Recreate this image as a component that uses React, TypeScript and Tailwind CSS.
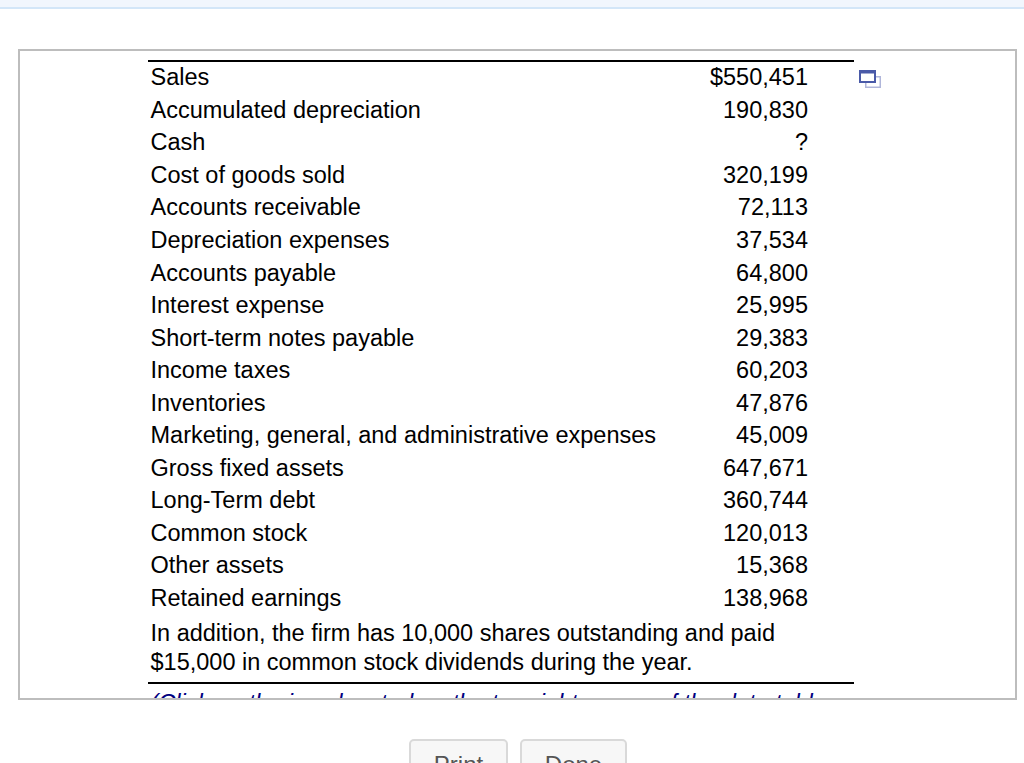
const rows: [string, string][] = [
  ["Sales", "$550,451"],
  ["Accumulated depreciation", "190,830"],
  ["Cash", "?"],
  ["Cost of goods sold", "320,199"],
  ["Accounts receivable", "72,113"],
  ["Depreciation expenses", "37,534"],
  ["Accounts payable", "64,800"],
  ["Interest expense", "25,995"],
  ["Short-term notes payable", "29,383"],
  ["Income taxes", "60,203"],
  ["Inventories", "47,876"],
  ["Marketing, general, and administrative expenses", "45,009"],
  ["Gross fixed assets", "647,671"],
  ["Long-Term debt", "360,744"],
  ["Common stock", "120,013"],
  ["Other assets", "15,368"],
  ["Retained earnings", "138,968"],
];

function CopyIcon() {
  return (
    <svg width="22" height="18" viewBox="0 0 22 18" className="shrink-0 mt-[10px] ml-[5px]" fill="none">
      <rect x="6.75" y="6.75" width="14.5" height="10.5" stroke="#b0b6da" strokeWidth="1.5" />
      <rect x="1" y="1" width="15" height="11" fill="#fff" stroke="#4a5aa8" strokeWidth="2" />
      <rect x="1" y="1" width="15" height="2.5" fill="#4a5aa8" />
    </svg>
  );
}

export default function App() {
  return (
    <div className="h-[763px] w-[1024px] overflow-hidden bg-white font-['Liberation_Sans',Arial,sans-serif] text-black">
      <div className="h-[9px] bg-[#f1f6fd] border-b-2 border-[#d3e6f8]" />
      <div className="mt-[40px] ml-[18px] w-[999px] h-[651px] border-2 border-[#bdbdbd] overflow-hidden flex pl-[128px] pt-[9px]">
        <div className="w-[706px] shrink-0">
          <div className="border-t-2 border-black">
            {rows.map(([label, value]) => (
              <div key={label} className="h-[32.56px] flex items-center justify-between pl-[2.5px] pr-[46px] text-[23.5px] leading-[32px] -translate-y-[1px]">
                <span>{label}</span>
                <span>{value}</span>
              </div>
            ))}
          </div>
          <div className="pl-[2.5px] pt-[4px] pb-[5px] text-[23.5px] leading-[29px]">
            In addition, the firm has 10,000 shares outstanding and paid
            <br />
            $15,000 in common stock dividends during the year.
          </div>
          <div className="border-t-2 border-black pt-[5px] pl-[2.5px] italic text-[#000080] text-[23.5px] leading-[29px] whitespace-nowrap">
            (Click on the icon located on the top-right corner of the data table
          </div>
        </div>
        <CopyIcon />
      </div>
      <div className="mt-[39px] ml-[409px] flex gap-[12px]">
        <div className="w-[99px] h-[40px] border-2 border-[#d9d9d9] rounded-[5px] bg-[#f7f7f7] text-[#555] text-[24px] text-center pt-[9px] leading-[30px]">Print</div>
        <div className="w-[107px] h-[40px] border-2 border-[#d9d9d9] rounded-[5px] bg-[#f7f7f7] text-[#555] text-[24px] text-center pt-[9px] leading-[30px]">Done</div>
      </div>
    </div>
  );
}
